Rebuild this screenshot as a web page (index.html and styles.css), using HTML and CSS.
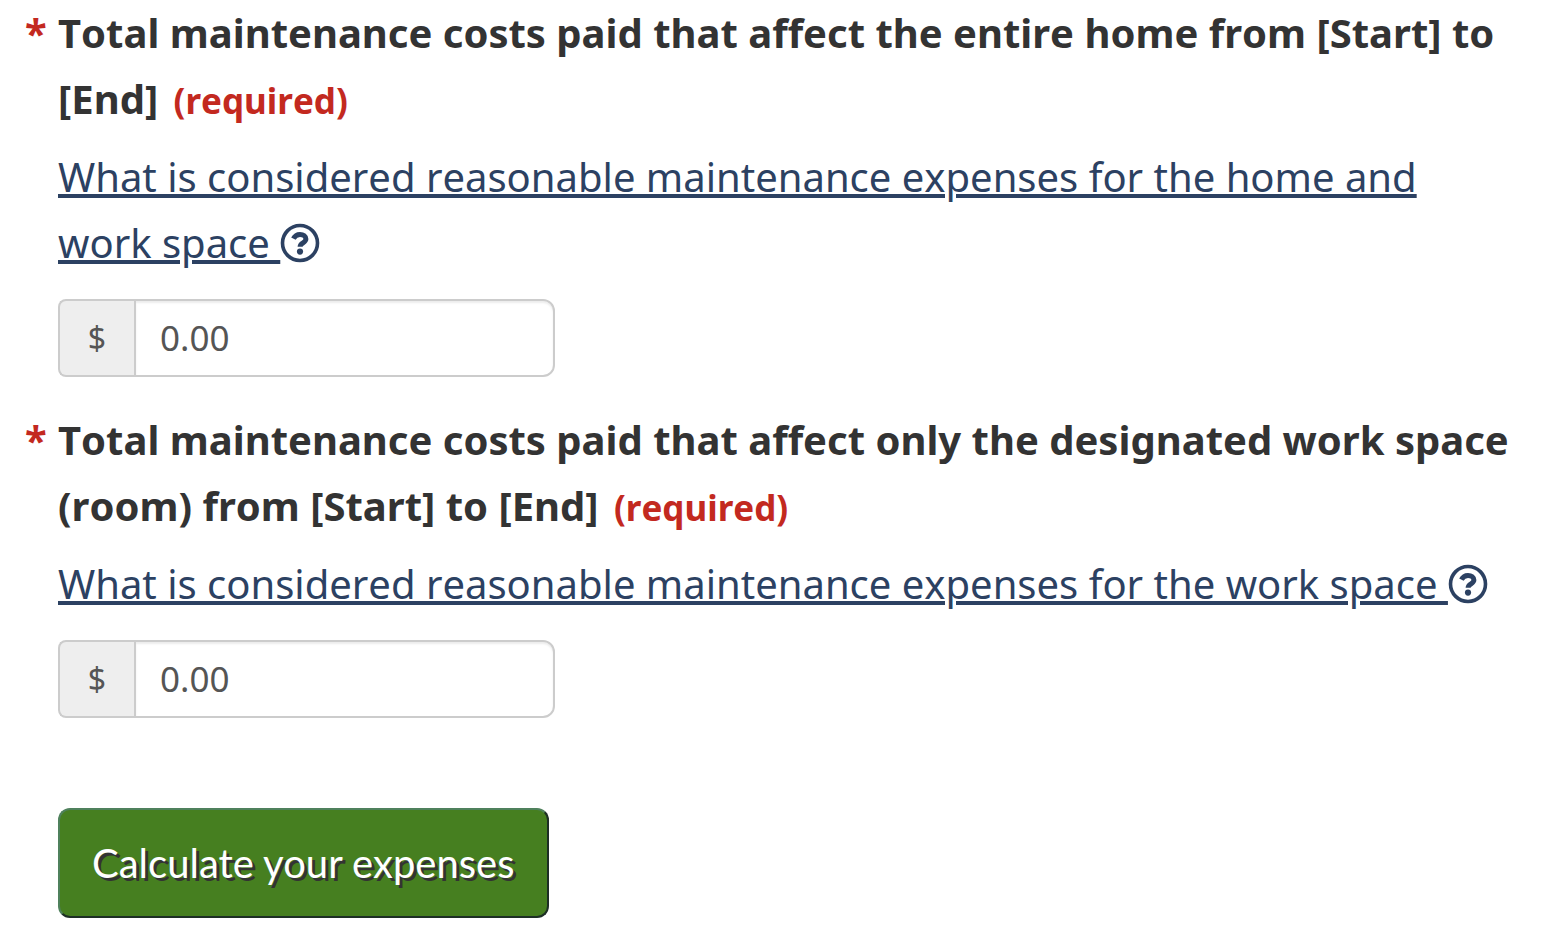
FILE: index.html
```html
<!DOCTYPE html>
<html lang="en">
<head>
    <meta charset="UTF-8">
    <meta name="viewport" content="width=device-width, initial-scale=1.0">
    <title>Maintenance expenses</title>
    <link rel="stylesheet" href="styles.css">
</head>
<body>
    <form class="expenses">
        <div class="form-group">
            <label for="homeCosts" class="required"><span class="star">*</span>Total maintenance costs paid that affect the entire home from [Start] to [End] <strong>(required)</strong></label>
            <p class="help"><a href="#home-help">What is considered reasonable maintenance expenses for the home and work space <svg class="icon" viewBox="0 0 40 40" role="img" aria-label="Help"><circle cx="20" cy="20" r="17.5"/><path d="M13.4 15.6C14.8 12.8 17 11.4 20 11.4c3.4 0 5.9 1.9 5.9 4.7 0 3.9-5.8 3.6-5.8 7.7"/><circle class="dot" cx="20" cy="28.6" r="3.1"/></svg></a></p>
            <div class="input-group">
                <span class="addon">$</span>
                <input type="text" id="homeCosts" placeholder="0.00">
            </div>
        </div>
        <div class="form-group">
            <label for="roomCosts" class="required"><span class="star">*</span>Total maintenance costs paid that affect only the designated work space (room) from [Start] to [End] <strong>(required)</strong></label>
            <p class="help"><a href="#room-help">What is considered reasonable maintenance expenses for the work space <svg class="icon" viewBox="0 0 40 40" role="img" aria-label="Help"><circle cx="20" cy="20" r="17.5"/><path d="M13.4 15.6C14.8 12.8 17 11.4 20 11.4c3.4 0 5.9 1.9 5.9 4.7 0 3.9-5.8 3.6-5.8 7.7"/><circle class="dot" cx="20" cy="28.6" r="3.1"/></svg></a></p>
            <div class="input-group">
                <span class="addon">$</span>
                <input type="text" id="roomCosts" placeholder="0.00">
            </div>
        </div>
        <button type="button" class="btn-call">Calculate your expenses</button>
    </form>
</body>
</html>
```
FILE: styles.css
```css
* {
    box-sizing: border-box;
}
body {
    margin: 0;
    background-color: #fff;
    color: #333;
    font-family: "Noto Sans", sans-serif;
    font-size: 40px;
    font-kerning: none;
    line-height: 66px;
}
.expenses {
    padding: 0 38px 34px 58px;
}
.form-group {
    margin-bottom: 30px;
}
.required {
    display: block;
    margin-bottom: 10px;
    font-weight: 700;
}
.required strong {
    margin-left: 5px;
    color: #c3291f;
    font-size: 35px;
    font-weight: 700;
}
.star {
    display: inline-block;
    width: 33px;
    margin-left: -33px;
    color: #c3291f;
}
.help {
    margin: 0 0 23px;
}
.help a {
    color: #2c4162;
    text-decoration-thickness: 4px;
}
.icon {
    width: 40px;
    height: 40px;
    fill: none;
    stroke: #2c4162;
    stroke-width: 3.6;
    vertical-align: -5px;
}
.icon path {
    stroke-width: 5;
}
.icon .dot {
    fill: #2c4162;
    stroke: none;
}
.input-group {
    display: flex;
    width: 497px;
    height: 78px;
    font-size: 35px;
}
.addon {
    display: flex;
    align-items: center;
    justify-content: center;
    width: 76px;
    border: 2px solid #ccc;
    border-right: 0;
    border-radius: 8px 0 0 8px;
    background-color: #eee;
    color: #555;
    font-size: 32px;
}
.input-group input {
    flex: 1;
    min-width: 0;
    padding: 0 24px;
    border: 2px solid #ccc;
    border-radius: 0 12px 12px 0;
    box-shadow: inset 0 2px 2px rgba(0, 0, 0, 0.075);
    color: #555;
    font: inherit;
}
.input-group input::placeholder {
    color: #555;
}
.btn-call {
    display: block;
    margin-top: 90px;
    padding: 20px 32px;
    border: 2px solid;
    border-color: #4f815c #1d2f25 #1d2f25 #4f815c;
    border-radius: 12px;
    background-color: #467f20;
    color: #fff;
    font-family: Lato, sans-serif;
    font-size: 40px;
    font-kerning: auto;
    line-height: 66px;
    text-shadow: 3px 3px 0 #333;
}
```
